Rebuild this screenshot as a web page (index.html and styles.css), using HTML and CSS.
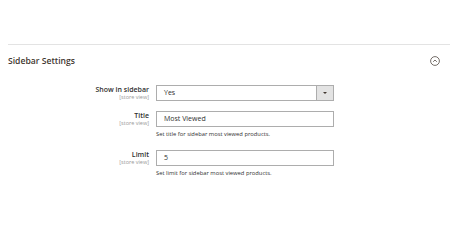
FILE: index.html
```html
<!DOCTYPE html>
<html lang="en">
<head>
  <meta charset="UTF-8">
  <title>Sidebar Settings</title>
  <link rel="stylesheet" href="styles.css">
</head>
<body>
  <div class="section">
    <div class="section-head">
      <span class="section-title">Sidebar Settings</span>
      <svg class="toggle" width="10" height="10" viewBox="0 0 10 10">
        <circle cx="5" cy="5" r="4.4" fill="none" stroke="#514943" stroke-width="0.8" />
        <path d="M3.2 5.8 L5 4 L6.8 5.8" fill="none" stroke="#514943" stroke-width="0.8" />
      </svg>
    </div>

    <div class="fields">
      <div class="field">
        <div class="label">
          <span>Show in sidebar</span>
          <span class="scope">[store view]</span>
        </div>
        <div class="control">
          <div class="select">
            <span>Yes</span>
            <span class="select-btn"><i class="arrow"></i></span>
          </div>
        </div>
      </div>

      <div class="field">
        <div class="label">
          <span>Title</span>
          <span class="scope">[store view]</span>
        </div>
        <div class="control">
          <div class="input">Most Viewed</div>
          <div class="note">Set title for sidebar most viewed products.</div>
        </div>
      </div>

      <div class="field">
        <div class="label">
          <span>Limit</span>
          <span class="scope">[store view]</span>
        </div>
        <div class="control">
          <div class="input">5</div>
          <div class="note">Set limit for sidebar most viewed products.</div>
        </div>
      </div>
    </div>
  </div>
</body>
</html>
```

FILE: styles.css
```css
* {
  box-sizing: border-box;
  margin: 0;
  padding: 0;
}

body {
  background: #ffffff;
  font-family: 'Open Sans', sans-serif;
  color: #303030;
}

.section {
  margin: 44px 0 0 8px;
  border-top: 1px solid #e3e3e3;
}

.section-head {
  display: flex;
  justify-content: space-between;
  align-items: center;
  padding-right: 10px;
  height: 32px;
}

.section-title {
  font-size: 8.6px;
  font-weight: 600;
  color: #41362f;
}

.toggle {
  display: block;
}

.fields {
  padding-top: 8px;
  display: flex;
  flex-direction: column;
  gap: 10px;
}

.field {
  display: grid;
  grid-template-columns: 141px 178px;
  column-gap: 7px;
  align-items: start;
}

.label {
  display: flex;
  flex-direction: column;
  align-items: flex-end;
  font-size: 7px;
  font-weight: 600;
  color: #303030;
  line-height: 9px;
}

.scope {
  font-size: 5.5px;
  font-weight: 400;
  color: #999999;
  line-height: 7px;
}

.select,
.input {
  height: 16px;
  border: 1px solid #adadad;
  font-size: 7px;
  line-height: 14px;
  padding-left: 7px;
  color: #303030;
  background: #fff;
}

.select {
  display: flex;
  justify-content: space-between;
  padding-right: 0;
}

.select-btn {
  width: 17px;
  background: #e3e3e3;
  border-left: 1px solid #adadad;
  display: flex;
  align-items: center;
  justify-content: center;
}

.arrow {
  width: 0;
  height: 0;
  border-left: 2px solid transparent;
  border-right: 2px solid transparent;
  border-top: 2.5px solid #41362f;
}

.note {
  font-size: 5.8px;
  line-height: 9px;
  color: #303030;
  margin: 3px 0 1px;
}
```
